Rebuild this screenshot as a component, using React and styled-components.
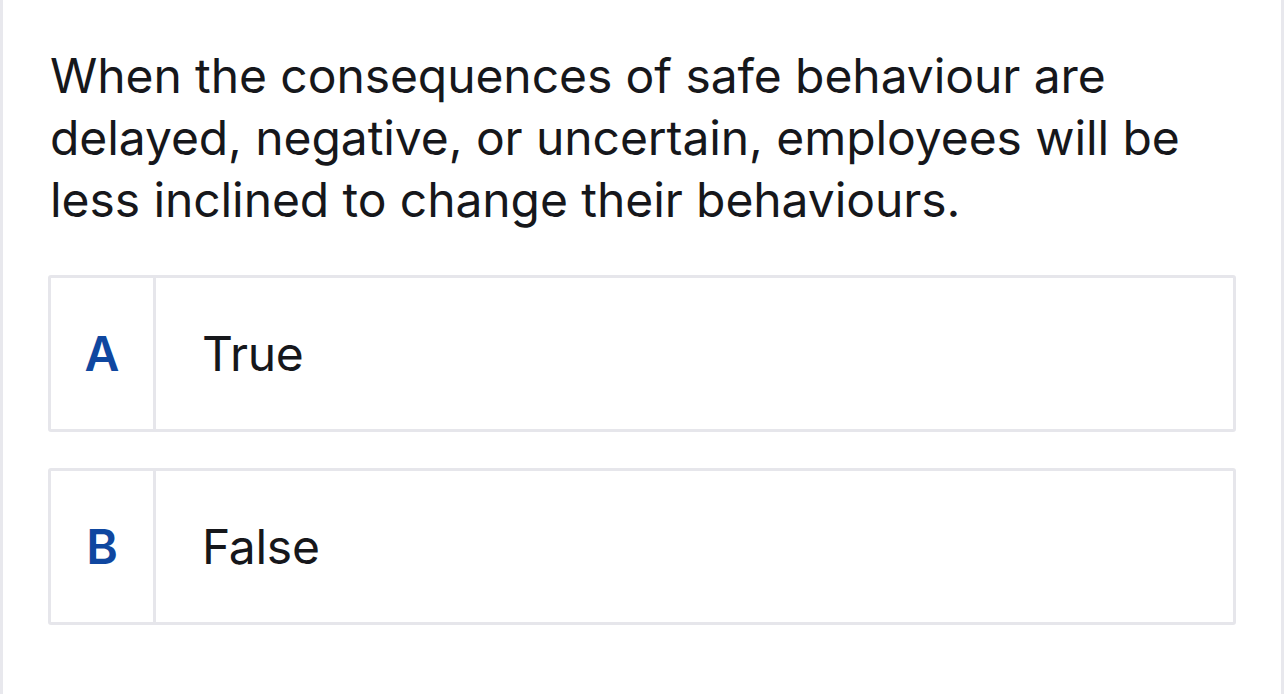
import React from 'react';
import styled, { createGlobalStyle } from 'styled-components';

const GlobalStyle = createGlobalStyle`
  html, body {
    margin: 0;
    padding: 0;
    background: #e8e8ed;
  }
  body {
    font-family: Inter, "Liberation Sans", Arial, sans-serif;
  }
`;

const Panel = styled.main`
  margin: 0 3px;
  min-height: 694px;
  box-sizing: border-box;
  background: #ffffff;
  padding: 45px 45px 0 45px;
`;

const Question = styled.h1`
  margin: 0 0 44px 2px;
  font-size: 48px;
  line-height: 62px;
  font-weight: 400;
  color: #16171b;
  letter-spacing: -0.08px;
`;

const Options = styled.div`
  display: flex;
  flex-direction: column;
  gap: 36px;
`;

const Option = styled.button`
  display: grid;
  grid-template-columns: 105px 1fr;
  height: 157px;
  padding: 0;
  box-sizing: border-box;
  border: 3px solid #e6e6eb;
  border-radius: 3px;
  background: #ffffff;
  text-align: left;
  cursor: pointer;
  font-family: inherit;
`;

const Letter = styled.span`
  display: flex;
  align-items: center;
  justify-content: center;
  border-right: 3px solid #e6e6eb;
  font-size: 48px;
  font-weight: 600;
  color: #0f47a0;
`;

const Label = styled.span`
  display: flex;
  align-items: center;
  padding-left: 46px;
  font-size: 48px;
  color: #16171b;
  letter-spacing: -0.3px;
`;

const options = [
  { key: 'A', text: 'True' },
  { key: 'B', text: 'False' },
];

export default function App() {
  return (
    <>
      <GlobalStyle />
      <Panel>
        <Question>
          When the consequences of safe behaviour are
          <br />
          delayed, negative, or uncertain, employees will be
          <br />
          less inclined to change their behaviours.
        </Question>
        <Options>
          {options.map((o) => (
            <Option key={o.key} type="button">
              <Letter>{o.key}</Letter>
              <Label>{o.text}</Label>
            </Option>
          ))}
        </Options>
      </Panel>
    </>
  );
}
